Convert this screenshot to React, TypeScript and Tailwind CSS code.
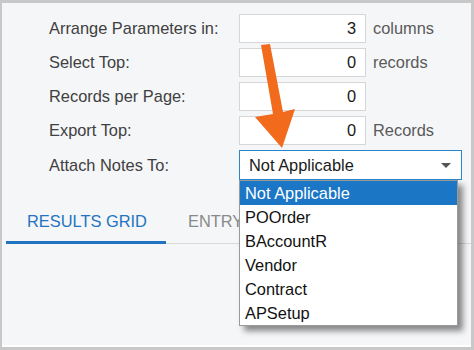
import React from 'react';

const rows = [
  { label: 'Arrange Parameters in:', value: '3', suffix: 'columns' },
  { label: 'Select Top:', value: '0', suffix: 'records' },
  { label: 'Records per Page:', value: '0', suffix: '' },
  { label: 'Export Top:', value: '0', suffix: 'Records' },
];

const options = ['Not Applicable', 'POOrder', 'BAccountR', 'Vendor', 'Contract', 'APSetup'];

export default function App() {
  return (
    <div
      className="relative w-[474px] h-[350px] overflow-hidden bg-[#c8c8c8] text-[16.4px]"
      style={{ fontFamily: '"Liberation Sans", Arial, sans-serif' }}
    >
      <div className="ml-[2px] mt-[3px] mr-[3px] h-[344px] bg-[#f5f6f8] border-b-2 border-white flex flex-col">
        {/* Parameters form */}
        <div className="flex flex-col gap-[6px] pl-[47px] pt-[11px]">
          {rows.map((r) => (
            <div key={r.label} className="flex items-center h-[28px]">
              <div className="w-[190px] text-[#404040] leading-none">{r.label}</div>
              <div className="w-[127px] h-[29px] bg-white border border-[#d6d6d6] flex items-center justify-end pr-[9px] text-[#1a1a1a]">
                {r.value}
              </div>
              <div className="ml-[7px] text-[#5a5a5a]">{r.suffix}</div>
            </div>
          ))}
          <div className="flex items-center h-[30px]">
            <div className="w-[190px] text-[#404040] leading-none">Attach Notes To:</div>
            <div className="w-[223px] h-[30px] bg-white border border-[#2a86cc] flex items-center justify-between pl-[9px] pr-[10px] text-[#1a1a1a]">
              <span>Not Applicable</span>
              <span className="w-0 h-0 border-l-[5px] border-r-[5px] border-t-[5px] border-l-transparent border-r-transparent border-t-[#555]" />
            </div>
          </div>
        </div>

        {/* Tabs */}
        <div className="mt-[21px] ml-[4px] flex border-b border-[#d9d9d9]">
          <div className="w-[160px] pl-[21px] pt-[11px] pb-[11px] border-b-[3px] border-[#1f73c0] text-[#2374c0] leading-[18px] -mb-px whitespace-nowrap">
            RESULTS GRID
          </div>
          <div className="ml-[22px] w-[51px] overflow-hidden whitespace-nowrap pt-[11px] pb-[11px] text-[#8a8a8a] leading-[18px]">
            ENTRY FORM
          </div>
        </div>
      </div>

      {/* Dropdown list */}
      <div className="absolute left-[239px] top-[180px] w-[219px] bg-white border border-[#9a9a9a] shadow-[5px_5px_6px_rgba(0,0,0,0.45)]">
        {options.map((o, i) => (
          <div
            key={o}
            className={
              i === 0
                ? 'h-[24px] pl-[5px] flex items-center bg-[#1c76c6] text-white'
                : 'h-[24px] pl-[5px] flex items-center text-[#111]'
            }
          >
            {o}
          </div>
        ))}
      </div>

      {/* Orange callout arrow */}
      <svg className="absolute left-0 top-0" width="474" height="350">
        <polygon
          points="261,45 270,44 283,112 295,109 282,148 255,117 273,114"
          fill="#f26a1c"
        />
      </svg>
    </div>
  );
}
